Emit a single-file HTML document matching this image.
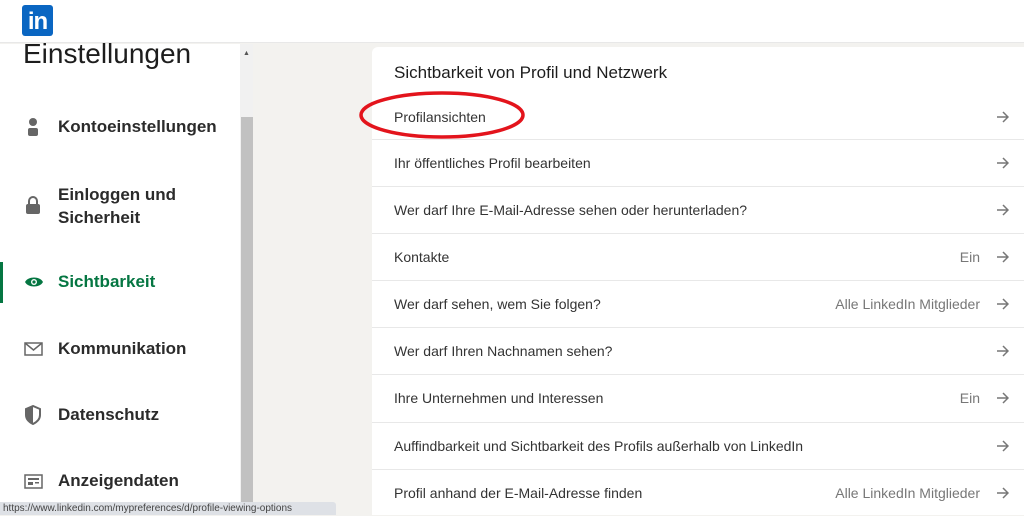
<!DOCTYPE html>
<html><head><meta charset="utf-8"><style>
*{margin:0;padding:0;box-sizing:border-box}
body{width:1024px;height:515px;overflow:hidden;background:#f3f2ef;font-family:"Liberation Sans",sans-serif;position:relative}
.hdr{position:absolute;left:0;top:0;width:1024px;height:43px;background:#fff;border-bottom:1px solid #e8e8e8}
.logo{position:absolute;left:22px;top:5px;width:31px;height:31px;background:#0a66c2;border-radius:3px;color:#fff;font:bold 24px/33px "Liberation Sans",sans-serif;text-align:center;letter-spacing:-1px}
.side{position:absolute;left:0;top:44px;width:240px;height:471px;background:#fff}
.track{position:absolute;left:240px;top:44px;width:13px;height:471px;background:#f1f1f1}
.thumb{position:absolute;left:241px;top:117px;width:12px;height:398px;background:#c1c1c1}
.h1{position:absolute;left:23px;top:38px;font-size:28px;color:#1d1d1d}
.it{position:absolute;left:58px;font-size:17px;font-weight:bold;color:#2b2b2b}
.ic{position:absolute;left:24px}
.card{position:absolute;left:372px;top:47px;width:652px;height:468px;background:#fff;border-radius:6px 0 0 0}
.ttl{position:absolute;left:394px;top:63px;font-size:17px;color:#1d1d1d}
.row{position:absolute;left:372px;width:652px;height:47px;border-top:1px solid #e8e8e8;font-size:14px;color:#333}
.row .t{position:absolute;left:22px;top:50%;transform:translateY(-50%)}
.row .v{position:absolute;right:44px;top:50%;transform:translateY(-50%);color:#777}
.row .a{position:absolute;right:15px;top:50%;width:13px;height:12px;margin-top:-6px}
.status{position:absolute;left:0;top:502px;width:336px;height:13px;background:#dee1e6;font-size:10px;color:#444;padding-left:3px;line-height:13px;border-radius:0 3px 0 0;overflow:hidden;white-space:nowrap}
</style></head><body>
<div class="hdr"><div class="logo">in</div></div>
<div class="side"></div>
<div class="track"></div><div class="thumb"></div>
<div style="position:absolute;left:243px;top:50px;font-size:7px;color:#555">▲</div>
<div class="h1">Einstellungen</div>
<svg class="ic" style="top:117px" width="18" height="20" viewBox="0 0 18 20"><circle cx="9" cy="5" r="4" fill="#666"/><rect x="4" y="11" width="10" height="8" rx="2" fill="#666"/></svg>
<div class="it" style="top:117px">Kontoeinstellungen</div>
<svg class="ic" style="top:195px" width="18" height="20" viewBox="0 0 18 20"><path d="M5 9V6a4 4 0 0 1 8 0v3" stroke="#666" stroke-width="2" fill="none"/><rect x="2" y="9" width="14" height="10" rx="2" fill="#666"/></svg>
<div class="it" style="top:183px;line-height:23px">Einloggen und<br>Sicherheit</div>
<div style="position:absolute;left:0;top:262px;width:3px;height:41px;background:#057642"></div>
<svg class="ic" style="top:274px" width="20" height="16" viewBox="0 0 20 16"><path d="M1 8C4 2 16 2 19 8C16 14 4 14 1 8Z" fill="#057642"/><circle cx="10" cy="8" r="3" fill="#fff"/><circle cx="10" cy="8" r="1.6" fill="#057642"/></svg>
<div class="it" style="top:272px;color:#057642">Sichtbarkeit</div>
<svg class="ic" style="top:342px" width="19" height="14" viewBox="0 0 19 14"><rect x="1" y="1" width="17" height="12" fill="none" stroke="#666" stroke-width="1.5"/><path d="M1 1l8.5 7L18 1" fill="none" stroke="#666" stroke-width="1.5"/></svg>
<div class="it" style="top:339px">Kommunikation</div>
<svg class="ic" style="top:405px" width="18" height="20" viewBox="0 0 18 20"><path d="M9 1L2 4v6c0 4 3 7 7 9 4-2 7-5 7-9V4Z" fill="none" stroke="#666" stroke-width="2"/><path d="M9 1v18c-4-2-7-5-7-9V4Z" fill="#666"/></svg>
<div class="it" style="top:405px">Datenschutz</div>
<svg class="ic" style="top:474px" width="19" height="15" viewBox="0 0 19 15"><rect x="1" y="1" width="17" height="13" fill="none" stroke="#666" stroke-width="1.5"/><rect x="4" y="4" width="11" height="2" fill="#666"/><rect x="4" y="8" width="5" height="3" fill="#666"/><rect x="11" y="8" width="4" height="1.5" fill="#666"/></svg>
<div class="it" style="top:471px">Anzeigendaten</div>
<div class="card"></div>
<div class="ttl">Sichtbarkeit von Profil und Netzwerk</div>
<svg width="0" height="0" style="position:absolute"><defs><symbol id="ar" viewBox="0 0 13 12"><path d="M1 6h11M7 1l5 5-5 5" fill="none" stroke="#777" stroke-width="1.5"/></symbol></defs></svg>
<div class="row" style="top:93px;border-top:none"><span class="t">Profilansichten</span><svg class="a"><use href="#ar"/></svg></div>
<div class="row" style="top:139px"><span class="t">Ihr öffentliches Profil bearbeiten</span><svg class="a"><use href="#ar"/></svg></div>
<div class="row" style="top:186px"><span class="t">Wer darf Ihre E-Mail-Adresse sehen oder herunterladen?</span><svg class="a"><use href="#ar"/></svg></div>
<div class="row" style="top:233px"><span class="t">Kontakte</span><span class="v">Ein</span><svg class="a"><use href="#ar"/></svg></div>
<div class="row" style="top:280px"><span class="t">Wer darf sehen, wem Sie folgen?</span><span class="v">Alle LinkedIn Mitglieder</span><svg class="a"><use href="#ar"/></svg></div>
<div class="row" style="top:327px"><span class="t">Wer darf Ihren Nachnamen sehen?</span><svg class="a"><use href="#ar"/></svg></div>
<div class="row" style="top:374px"><span class="t">Ihre Unternehmen und Interessen</span><span class="v">Ein</span><svg class="a"><use href="#ar"/></svg></div>
<div class="row" style="top:422px"><span class="t">Auffindbarkeit und Sichtbarkeit des Profils außerhalb von LinkedIn</span><svg class="a"><use href="#ar"/></svg></div>
<div class="row" style="top:469px"><span class="t">Profil anhand der E-Mail-Adresse finden</span><span class="v">Alle LinkedIn Mitglieder</span><svg class="a"><use href="#ar"/></svg></div>
<svg style="position:absolute;left:355px;top:88px" width="175" height="56" viewBox="0 0 175 56"><ellipse cx="87" cy="27" rx="81" ry="22" fill="none" stroke="#e3141c" stroke-width="3.5"/></svg>
<div class="status">https://www.linkedin.com/mypreferences/d/profile-viewing-options</div>
</body></html>
